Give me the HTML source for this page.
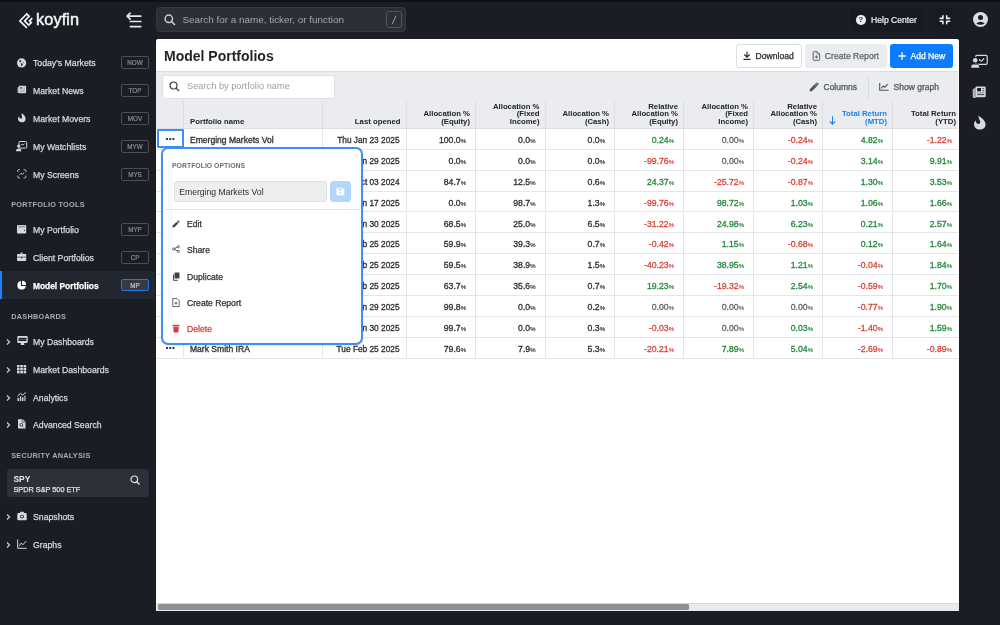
<!DOCTYPE html><html><head><meta charset="utf-8"><style>
*{margin:0;padding:0;box-sizing:border-box}
html,body{width:1000px;height:625px;overflow:hidden;background:#1a1d24;font-family:"Liberation Sans",sans-serif}
.a{position:absolute}
svg{display:block}
.side,.mi,.btn,.t{-webkit-text-stroke:0.25px currentColor}
.c{-webkit-text-stroke:0.3px currentColor}
#root{position:absolute;left:0;top:0;width:1000px;height:625px;will-change:transform}
.side{color:#d6d9de;font-size:8.7px;white-space:nowrap}
.sec{color:#a7abb2;font-size:7.3px;font-weight:bold;letter-spacing:0.27px}
.badge{position:absolute;left:121px;width:28px;height:12.6px;border:1px solid #4a4e56;border-radius:2px;color:#8e939b;font-size:6.3px;text-align:center;line-height:11px;letter-spacing:0;-webkit-text-stroke:0.15px currentColor}
.panel{position:absolute;left:156px;top:39px;width:802.5px;height:572px;background:#fff;border-radius:2px;overflow:hidden}
.btn{position:absolute;top:44px;height:23.5px;border-radius:3px;font-size:8.6px;line-height:23.5px;white-space:nowrap}
.hd{position:absolute;top:101px;height:28px;background:#ebecef;border-right:1px solid #dcdee2;border-bottom:1px solid #dcdee2;font-weight:bold;font-size:7.75px;line-height:7.55px;color:#202328;text-align:right;padding-right:5px;display:flex;flex-direction:column;justify-content:flex-end;padding-bottom:2.5px}
.c{position:absolute;height:20.85px;border-right:1px solid #e3e5e8;border-bottom:1px solid #e3e5e8;font-size:8.7px;line-height:22.6px;text-align:right;padding-right:9px;color:#2b2e33;white-space:nowrap;overflow:hidden}
.p{font-size:6px;-webkit-text-stroke:0.15px currentColor;margin-left:0.2px;letter-spacing:-0.2px}
.mi{position:absolute;left:187px;font-size:8.65px;color:#2c2f34;white-space:nowrap}
</style></head><body><div id="root">
<div class="a" style="left:0;top:0;width:1000px;height:1.5px;background:#0e1014"></div>
<svg class="a" style="left:17px;top:11px" width="18" height="20" viewBox="17 11 18 20"><path d="M26.9 27.95 L19.85 20.9 L26.75 14 L29.1 16.35 L24.55 20.9 L28.75 25.1 L31.3 22.55 L29.55 20.8 L32.3 18.05" fill="none" stroke="#f4f5f7" stroke-width="1.7" stroke-linejoin="miter" stroke-miterlimit="4"/></svg>
<div class="a" style="left:36px;top:10px;font-size:16.3px;color:#f4f5f7;letter-spacing:0.1px;-webkit-text-stroke:0.5px currentColor">koyfin</div>
<svg class="a" style="left:126px;top:12px" width="16" height="17" viewBox="0 0 16 17"><path d="M4.1 1.1 L1.1 4.1 L4.1 7.1 M1.2 4.1 H14.8 M4.4 9.5 H14.8 M4.4 14.6 H14.8" fill="none" stroke="#e4e6e9" stroke-width="1.7" stroke-linecap="round" stroke-linejoin="round"/></svg>
<div class="a" style="left:155.5px;top:7px;width:250.5px;height:24.7px;background:#2a2f38;border:1px solid #343943;border-radius:3.5px"></div>
<svg class="a" style="left:164px;top:14px" width="12" height="12" viewBox="0 0 12 12"><circle cx="4.8" cy="4.8" r="3.7" fill="none" stroke="#c9ccd1" stroke-width="1.5"/><path d="M7.6 7.6 L11 11" stroke="#c9ccd1" stroke-width="1.6"/></svg>
<div class="a" style="left:182.5px;top:13.5px;font-size:9.9px;color:#a4a8b0;white-space:nowrap">Search for a name, ticker, or function</div>
<div class="a" style="left:386px;top:11px;width:16px;height:17px;border:1px solid #50555e;border-radius:2.5px"></div>
<svg class="a" style="left:391px;top:15px" width="6" height="10" viewBox="0 0 6 10"><path d="M1.3 8.9 L4.9 1.1" stroke="#a9adb4" stroke-width="0.9" stroke-linecap="round"/></svg>
<div class="a" style="left:850px;top:8px;width:73px;height:23px;background:#171a20;border-radius:3px"></div>
<div class="a" style="left:856px;top:15.2px;width:9.6px;height:9.6px;border-radius:50%;background:#f0f1f3;color:#1a1d24;font-size:7.5px;font-weight:bold;text-align:center;line-height:9.8px">?</div>
<div class="a side" style="left:871px;top:14.5px;color:#eef0f2;font-size:8.6px;-webkit-text-stroke:0.2px currentColor">Help Center</div>
<div class="a" style="left:933.5px;top:7px;width:24px;height:25.5px;background:#181b21;border-radius:3px"></div>
<svg class="a" style="left:939px;top:14.5px" width="12" height="10" viewBox="0 0 12 10"><path d="M1.2 3.4 H3.9 V0.9 M7.7 0.9 V3.4 H10.6 M1.2 6.2 H3.9 V8.7 M7.7 8.7 V6.2 H10.6" fill="none" stroke="#eceef0" stroke-width="1.6" stroke-linejoin="round" stroke-linecap="round"/></svg>
<svg class="a" style="left:972.5px;top:12px" width="15" height="15" viewBox="0 0 15 15"><circle cx="7.5" cy="7.5" r="7.5" fill="#dcdde0"/><circle cx="7.5" cy="5.6" r="2.5" fill="#1a1d24"/><path d="M3.2 11.6 Q7.5 7.8 11.8 11.6 Q7.5 14 3.2 11.6Z" fill="#1a1d24"/></svg>
<div class="a" style="left:17px;top:57.5px;width:12px;height:11px"><svg width="10" height="10" viewBox="0 0 10 10"><circle cx="4.6" cy="4.9" r="4.6" fill="#d6d9de"/><path d="M2.3 3.3 Q2.8 1.8 4.3 2.1 Q4.6 3 3.6 3.7 Q3.6 4.6 2.8 4.4Z M3.9 5.4 Q5.2 5.1 5.9 6 Q5.4 7.2 4.6 8.6 Q3.9 7 3.9 5.4Z M6.4 3.9 Q7.2 3.9 7.2 4.6 Q6.7 5.2 6.2 4.7Z" fill="#1a1d24"/></svg></div>
<div class="a side" style="left:33px;top:58.0px;">Today's Markets</div>
<div class="badge" style="top:56.1px;">NOW</div>
<div class="a" style="left:17px;top:85.3px;width:12px;height:11px"><svg width="10" height="10" viewBox="0 0 10 10"><path d="M0.6 2.2 H1.7 V7.8 Q1.7 8.2 1.2 8.2 Q0.6 8.2 0.6 7.6Z" fill="#d6d9de"/><rect x="1.7" y="0.8" width="7.4" height="7.4" rx="0.8" fill="#d6d9de"/><ellipse cx="4.2" cy="2.9" rx="1.2" ry="0.7" fill="#1a1d24"/><path d="M6.5 2.3 H8 M6.5 3.6 H8 M3 5.3 H8 M3 6.7 H8" stroke="#8e9299" stroke-width="0.6"/></svg></div>
<div class="a side" style="left:33px;top:86.0px;">Market News</div>
<div class="badge" style="top:84.1px;">TOP</div>
<div class="a" style="left:17.8px;top:113.3px;width:12px;height:11px"><svg width="10" height="10" viewBox="0 0 10 10"><path d="M3.7 0 C5.5 1.7 7.6 3 7.6 5.9 C7.6 8 5.9 9.3 3.8 9.3 C1.6 9.3 0 7.8 0 5.8 C0 4.6 0.5 3.8 1.2 3.2 C1.2 4.6 1.9 5.5 2.9 5.5 C3.9 5.5 4.3 4.7 4 3.7 C3.7 2.7 3.4 1.3 3.7 0Z" fill="#d6d9de"/></svg></div>
<div class="a side" style="left:33px;top:114.0px;">Market Movers</div>
<div class="badge" style="top:112.1px;">MOV</div>
<div class="a" style="left:16px;top:140.5px;width:12px;height:11px"><svg width="12" height="11" viewBox="0 0 12 11"><rect x="2.9" y="0.5" width="7.8" height="6.6" rx="1" fill="none" stroke="#d6d9de" stroke-width="1"/><path d="M4.6 4.3 L6.2 3.3 L7.2 4 L8.5 2.6" fill="none" stroke="#d6d9de" stroke-width="0.9"/><circle cx="2.6" cy="5" r="1.5" fill="#d6d9de"/><path d="M0 10.3 Q0 7.4 2.6 7.4 Q5.4 7.4 5.4 10.3Z" fill="#d6d9de"/></svg></div>
<div class="a side" style="left:33px;top:142.0px;">My Watchlists</div>
<div class="badge" style="top:140.1px;">MYW</div>
<div class="a" style="left:17px;top:169.0px;width:12px;height:11px"><svg width="10" height="10" viewBox="0 0 10 10"><path d="M0.7 3 V1.7 Q0.7 0.7 1.7 0.7 H3 M6.6 0.7 H7.9 Q8.9 0.7 8.9 1.7 V3 M8.9 6.6 V7.9 Q8.9 8.9 7.9 8.9 H6.6 M3 8.9 H1.7 Q0.7 8.9 0.7 7.9 V6.6" fill="none" stroke="#b9bcc2" stroke-width="1"/><path d="M2.5 5.9 L4.1 4.3 L5.5 5.2 L7.2 3.6" fill="none" stroke="#d6d9de" stroke-width="0.9"/></svg></div>
<div class="a side" style="left:33px;top:170.0px;">My Screens</div>
<div class="badge" style="top:168.1px;">MYS</div>
<div class="a sec" style="left:11.2px;top:200.2px">PORTFOLIO TOOLS</div>
<div class="a" style="left:17px;top:225.0px;width:12px;height:11px"><svg width="10" height="10" viewBox="0 0 10 10"><rect x="0" y="0" width="9.2" height="8.4" rx="0.9" fill="#d6d9de"/><rect x="1.2" y="0.6" width="7" height="2" fill="#9c9fa5"/><circle cx="7.5" cy="5.3" r="0.6" fill="#1a1d24"/></svg></div>
<div class="a side" style="left:33px;top:225.0px;">My Portfolio</div>
<div class="badge" style="top:223.1px;">MYP</div>
<div class="a" style="left:17px;top:252.2px;width:12px;height:11px"><svg width="10" height="10" viewBox="0 0 10 10"><path d="M2.9 2 Q3.3 0.2 4.6 0.2 Q5.9 0.2 6.3 2Z" fill="#9c9fa5"/><rect x="0" y="2" width="9.2" height="7" rx="0.9" fill="#d6d9de"/><path d="M0 5.1 H9.2" stroke="#1a1d24" stroke-width="0.6"/><circle cx="4.6" cy="5.7" r="0.7" fill="#1a1d24"/></svg></div>
<div class="a side" style="left:33px;top:253.0px;">Client Portfolios</div>
<div class="badge" style="top:251.1px;">CP</div>
<div class="a" style="left:0;top:271px;width:155px;height:28px;background:#22262e"></div>
<div class="a" style="left:0;top:271px;width:2px;height:28px;background:#1a84ff"></div>
<div class="a" style="left:17px;top:280px;width:12px;height:11px"><svg width="10" height="10" viewBox="0 0 10 10"><path d="M3.9 1.1 A4.3 4.3 0 1 0 8.9 6.1 H3.9Z" fill="#fff"/><path d="M5 0.8 A4.3 4.3 0 0 1 9.1 4.9 H5Z" fill="#fff"/></svg></div>
<div class="a side" style="left:33px;top:280.5px;font-weight:bold;color:#fff;font-size:8.4px;">Model Portfolios</div>
<div class="badge" style="top:278.6px;border-color:#1f7ae8;background:#353a43;color:#c8ccd2;">MP</div>
<div class="a sec" style="left:11.2px;top:311.6px">DASHBOARDS</div>
<svg class="a" style="left:5.8px;top:339.0px" width="5" height="6" viewBox="0 0 5 6"><path d="M1 0.5 L3.6 3 L1 5.5" fill="none" stroke="#d0d3d8" stroke-width="1.1"/></svg>
<div class="a" style="left:16.5px;top:336.0px;width:12px;height:11px"><svg width="11" height="10" viewBox="0 0 11 10"><rect x="0.3" y="0" width="10.4" height="6.9" rx="1" fill="#d6d9de"/><rect x="1.6" y="1.8" width="7.8" height="3.2" fill="#1a1d24"/><path d="M1.6 3.4 H9.4" stroke="#8e9299" stroke-width="0.5"/><path d="M4 6.5 H7 L7.4 9 H3.6Z" fill="#d6d9de"/></svg></div>
<div class="a side" style="left:33px;top:337.0px;">My Dashboards</div>
<svg class="a" style="left:5.8px;top:367.0px" width="5" height="6" viewBox="0 0 5 6"><path d="M1 0.5 L3.6 3 L1 5.5" fill="none" stroke="#d0d3d8" stroke-width="1.1"/></svg>
<div class="a" style="left:17px;top:364.8px;width:12px;height:11px"><svg width="10" height="10" viewBox="0 0 10 10"><g fill="#d6d9de"><rect x="0" y="0" width="2.6" height="2.4"/><rect x="3.3" y="0" width="2.6" height="2.4"/><rect x="6.6" y="0" width="2.6" height="2.4"/><rect x="0" y="3" width="2.6" height="2.4"/><rect x="3.3" y="3" width="2.6" height="2.4"/><rect x="6.6" y="3" width="2.6" height="2.4"/><rect x="0" y="6" width="2.6" height="2.4"/><rect x="3.3" y="6" width="2.6" height="2.4"/><rect x="6.6" y="6" width="2.6" height="2.4"/></g></svg></div>
<div class="a side" style="left:33px;top:365.0px;">Market Dashboards</div>
<svg class="a" style="left:5.8px;top:394.5px" width="5" height="6" viewBox="0 0 5 6"><path d="M1 0.5 L3.6 3 L1 5.5" fill="none" stroke="#d0d3d8" stroke-width="1.1"/></svg>
<div class="a" style="left:17px;top:392px;width:12px;height:11px"><svg width="10" height="10" viewBox="0 0 10 10"><path d="M0.4 4 L3.6 1.4 L5.8 3 L8.9 0.4" fill="none" stroke="#d6d9de" stroke-width="1"/><g fill="#d6d9de"><rect x="0.5" y="5.8" width="1.4" height="3.3"/><rect x="2.8" y="4.3" width="1.4" height="4.8"/><rect x="5" y="5.3" width="1.4" height="3.8"/><rect x="7.2" y="3.7" width="1.4" height="5.4" fill="#a9acb2"/></g></svg></div>
<div class="a side" style="left:33px;top:392.5px;">Analytics</div>
<svg class="a" style="left:5.8px;top:422.0px" width="5" height="6" viewBox="0 0 5 6"><path d="M1 0.5 L3.6 3 L1 5.5" fill="none" stroke="#d0d3d8" stroke-width="1.1"/></svg>
<div class="a" style="left:17px;top:419.0px;width:12px;height:11px"><svg width="10" height="10" viewBox="0 0 10 10"><path d="M1 0.6 Q1 0.2 1.5 0.2 H5.7 L8.5 3 V9.1 Q8.5 9.6 8 9.6 H1.5 Q1 9.6 1 9.1Z" fill="#d6d9de"/><path d="M5.3 0.5 V2.7 Q5.3 3.3 5.9 3.3 H8.3" fill="none" stroke="#1a1d24" stroke-width="0.6"/><circle cx="4.3" cy="5.8" r="1.4" fill="none" stroke="#1a1d24" stroke-width="0.8"/><path d="M5.2 6.8 L6.2 7.7" stroke="#1a1d24" stroke-width="0.8"/></svg></div>
<div class="a side" style="left:33px;top:420.0px;">Advanced Search</div>
<div class="a sec" style="left:11.2px;top:451px">SECURITY ANALYSIS</div>
<div class="a" style="left:7px;top:469px;width:142px;height:28px;background:#2c3039;border-radius:3px"></div>
<div class="a" style="left:13.5px;top:473.5px;font-size:8.4px;font-weight:bold;color:#eceef1">SPY</div>
<div class="a t" style="left:13.5px;top:484.5px;font-size:7.3px;color:#dfe2e6;white-space:nowrap">SPDR S&amp;P 500 ETF</div>
<svg class="a" style="left:130px;top:475px" width="11" height="10" viewBox="0 0 11 10"><circle cx="4.3" cy="4.3" r="3.3" fill="none" stroke="#dfe1e5" stroke-width="1.2"/><path d="M6.7 6.7 L9.5 9.5" stroke="#dfe1e5" stroke-width="1.4"/></svg>
<svg class="a" style="left:5.8px;top:513.8px" width="5" height="6" viewBox="0 0 5 6"><path d="M1 0.5 L3.6 3 L1 5.5" fill="none" stroke="#d0d3d8" stroke-width="1.1"/></svg>
<div class="a" style="left:17px;top:511.29999999999995px;width:12px;height:11px"><svg width="10" height="10" viewBox="0 0 10 10"><path d="M0.3 3 Q0.3 2 1.3 2 H2.8 L3.6 0.8 H6.4 L7.2 2 H8.7 Q9.7 2 9.7 3 V8.4 Q9.7 9.2 8.7 9.2 H1.3 Q0.3 9.2 0.3 8.4Z" fill="#d6d9de"/><circle cx="5" cy="5.6" r="1.9" fill="#1a1d24"/><circle cx="5" cy="5.6" r="1.1" fill="#d6d9de"/></svg></div>
<div class="a side" style="left:33px;top:511.79999999999995px;">Snapshots</div>
<svg class="a" style="left:5.8px;top:541.5px" width="5" height="6" viewBox="0 0 5 6"><path d="M1 0.5 L3.6 3 L1 5.5" fill="none" stroke="#d0d3d8" stroke-width="1.1"/></svg>
<div class="a" style="left:17px;top:539px;width:12px;height:11px"><svg width="10" height="10" viewBox="0 0 10 10"><path d="M0.7 0.5 V9.3 H9.7" fill="none" stroke="#d6d9de" stroke-width="1"/><path d="M2.2 6.8 L4.2 4 L5.8 5.8 L9.2 2" fill="none" stroke="#d6d9de" stroke-width="1"/></svg></div>
<div class="a side" style="left:33px;top:539.5px;">Graphs</div>
<svg class="a" style="left:968px;top:52px" width="22" height="18" viewBox="968 52 22 18"><rect x="975.6" y="55.4" width="11.6" height="9" rx="1.4" fill="none" stroke="#d6d9de" stroke-width="1.2"/><path d="M979.4 59.6 Q980.8 62 982.2 60.4 L983.8 58.6" fill="none" stroke="#d6d9de" stroke-width="1.2" stroke-linecap="round"/><circle cx="975.2" cy="60.2" r="3.4" fill="#1a1d24"/><circle cx="975.2" cy="60.2" r="2.3" fill="#d6d9de"/><path d="M970.2 68.6 L970.9 65.6 Q971.4 64 973.2 64 H977.2 Q979 64 979.5 65.6 L980.2 68.6Z" fill="#1a1d24"/><path d="M971 67.8 L971.6 65.6 Q971.9 64.5 973.2 64.5 H977.2 Q978.5 64.5 978.8 65.6 L979.4 67.8Z" fill="#d6d9de"/></svg>
<svg class="a" style="left:972px;top:85px" width="15" height="14" viewBox="972 85 15 14"><path d="M974.8 88 V96.2 Q974.8 97.2 974 97.2 Q973.3 97.2 973.3 96.2 V89" fill="none" stroke="#d6d9de" stroke-width="1.1"/><rect x="975.4" y="86.4" width="10.3" height="10.9" rx="1.3" fill="#d6d9de"/><path d="M974 97.2 H976" stroke="#d6d9de" stroke-width="0.9"/><rect x="977.2" y="88" width="3.8" height="3.3" fill="#1a1d24"/><path d="M982.2 88.6 H984.2 M982.2 90.7 H984.2" stroke="#1a1d24" stroke-width="0.7"/><rect x="977.2" y="92.5" width="7" height="0.8" fill="#7d8189"/><rect x="977.2" y="94.3" width="7" height="0.8" fill="#1a1d24"/></svg>
<svg class="a" style="left:972px;top:114px" width="15" height="17" viewBox="972 114 15 17"><path d="M978.6 115.4 C981.2 118 985.6 120 985.6 124.5 C985.6 127.6 983.1 129.6 979.8 129.6 C976.5 129.6 974 127.3 974 124.3 C974 122.5 974.8 121.2 975.9 120.4 C975.9 122.5 976.9 123.9 978.4 123.9 C979.9 123.9 980.6 122.6 980.1 121.1 C979.6 119.6 978.1 117.5 978.6 115.4Z" fill="#d6d9de"/></svg>
<div class="panel"></div>
<div class="a" style="left:164px;top:47.5px;font-size:14px;font-weight:bold;color:#1f2227;white-space:nowrap">Model Portfolios</div>
<div class="btn" style="left:735.5px;width:66px;background:#fff;border:1px solid #dcdfe3;color:#2b2e33"></div>
<svg class="a" style="left:743px;top:51px" width="8" height="9" viewBox="0 0 8 9"><path d="M4 0.5 V6 M1.3 3.5 L4 6.2 L6.7 3.5 M0.5 8.3 H7.5" fill="none" stroke="#2b2e33" stroke-width="1.2"/></svg>
<div class="a t" style="left:755.5px;top:50.5px;font-size:8.6px;color:#26292e;white-space:nowrap">Download</div>
<div class="btn" style="left:805px;width:81.5px;background:#ebecef"></div>
<svg class="a" style="left:811.5px;top:50.5px" width="9" height="10" viewBox="0 0 9 10"><path d="M1.9 0.7 H5.3 L7.6 3 V8.6 Q7.6 9.3 6.9 9.3 H1.9 Q1.2 9.3 1.2 8.6 V1.4 Q1.2 0.7 1.9 0.7Z" fill="none" stroke="#5f636a" stroke-width="1"/><path d="M5.1 0.8 V2.6 Q5.1 3.2 5.7 3.2 H7.5" fill="none" stroke="#5f636a" stroke-width="0.8"/><path d="M4.4 4.3 V7.5 M2.8 5.9 H6" stroke="#5f636a" stroke-width="0.9"/></svg>
<div class="a t" style="left:824.8px;top:50.5px;font-size:8.65px;color:#5f636a;white-space:nowrap">Create Report</div>
<div class="btn" style="left:889.5px;width:63px;background:#0b7cff"></div>
<svg class="a" style="left:897.5px;top:51.5px" width="8" height="8" viewBox="0 0 8 8"><path d="M4 0.3 V7.7 M0.3 4 H7.7" stroke="#fff" stroke-width="1.3"/></svg>
<div class="a t" style="left:910.5px;top:50.5px;font-size:8.55px;color:#fff;white-space:nowrap">Add New</div>
<div class="a" style="left:156px;top:71px;width:802px;height:30px;background:#ebecef;border-top:1px solid #d9dce0"></div>
<div class="a" style="left:162px;top:74.5px;width:172.5px;height:24px;background:#fff;border:1px solid #dfe1e5;border-radius:3px"></div>
<svg class="a" style="left:168.5px;top:80.5px" width="11" height="11" viewBox="0 0 11 11"><circle cx="4.5" cy="4.5" r="3.5" fill="none" stroke="#3b3e44" stroke-width="1.2"/><path d="M7.1 7.1 L10 10" stroke="#3b3e44" stroke-width="1.3"/></svg>
<div class="a" style="left:187px;top:81px;font-size:9.25px;color:#9a9ea5;white-space:nowrap">Search by portfolio name</div>
<svg class="a" style="left:808.5px;top:82px" width="10" height="10" viewBox="0 0 10 10"><path d="M0.6 9.4 L1 6.9 L6.6 1.3 L8.7 3.4 L3.1 9Z" fill="#4f535a"/><path d="M7.2 0.7 Q7.8 0.1 8.4 0.7 L9.3 1.6 Q9.9 2.2 9.3 2.8 L8.9 3.2 L6.8 1.1Z" fill="#4f535a"/><path d="M5.6 2.3 L7.7 4.4" stroke="#ebecef" stroke-width="0.5"/></svg>
<div class="a t" style="left:823.5px;top:82.4px;font-size:8.5px;color:#4f535a;white-space:nowrap">Columns</div>
<div class="a" style="left:868px;top:77.5px;width:1px;height:21px;background:#d6d9dd"></div>
<svg class="a" style="left:879px;top:83px" width="10" height="8" viewBox="0 0 10 8"><path d="M0.7 0 V7.2 H9.5" fill="none" stroke="#4f535a" stroke-width="1.1"/><path d="M2.4 5.3 L4.3 3 L5.8 4.2 L8.6 1.2" fill="none" stroke="#4f535a" stroke-width="1.1"/></svg>
<div class="a t" style="left:893.5px;top:82.4px;font-size:8.55px;color:#4f535a;white-space:nowrap">Show graph</div>
<div class="a" style="left:156px;top:101px;width:802px;height:1px;background:#d6d9de"></div>
<div class="a" style="left:0;top:0;width:957.5px;height:625px;overflow:hidden">
<div class="hd" style="left:156px;width:28px;"></div>
<div class="hd" style="left:184px;width:139px;text-align:left;padding-left:6px;"><div>Portfolio name</div></div>
<div class="hd" style="left:323px;width:83.5px;"><div>Last opened</div></div>
<div class="hd" style="left:406.5px;width:69.5px;"><div>Allocation %<br>(Equity)</div></div>
<div class="hd" style="left:476px;width:69.5px;"><div>Allocation %<br>(Fixed<br>Income)</div></div>
<div class="hd" style="left:545.5px;width:69.5px;"><div>Allocation %<br>(Cash)</div></div>
<div class="hd" style="left:615px;width:69px;"><div>Relative<br>Allocation %<br>(Equity)</div></div>
<div class="hd" style="left:684px;width:70px;"><div>Allocation %<br>(Fixed<br>Income)</div></div>
<div class="hd" style="left:754px;width:69px;"><div>Relative<br>Allocation %<br>(Cash)</div></div>
<div class="hd" style="left:823px;width:70px;color:#1a7ef0;"><div>Total Return<br>(MTD)</div></div>
<div class="hd" style="left:893px;width:69px;"><div>Total Return<br>(YTD)</div></div>
<svg class="a" style="left:828.5px;top:116px" width="7" height="9" viewBox="0 0 7 9"><path d="M3.5 0.3 V8 M0.8 5.3 L3.5 8.2 L6.2 5.3" fill="none" stroke="#1a7ef0" stroke-width="1.1"/></svg>
<div class="c" style="left:156px;top:129.0px;width:28px;padding:0"></div>
<div class="a" style="left:166px;top:138.2px;width:1.7px;height:1.7px;background:#3a3d42;box-shadow:3.2px 0 0 #3a3d42,6.4px 0 0 #3a3d42"></div>
<div class="c" style="left:184px;top:129.0px;width:139px;text-align:left;padding-left:6px;font-size:8.55px">Emerging Markets Vol</div>
<div class="c" style="left:323px;top:129.0px;width:83.5px;padding-right:6px;font-size:8.3px">Thu Jan 23 2025</div>
<div class="c" style="left:406.5px;top:129.0px;width:69.5px;color:#2b2e33">100.0<span class="p">%</span></div>
<div class="c" style="left:476px;top:129.0px;width:69.5px;color:#2b2e33">0.0<span class="p">%</span></div>
<div class="c" style="left:545.5px;top:129.0px;width:69.5px;color:#2b2e33">0.0<span class="p">%</span></div>
<div class="c" style="left:615px;top:129.0px;width:69px;color:#23883d">0.24<span class="p">%</span></div>
<div class="c" style="left:684px;top:129.0px;width:70px;color:#5f636a">0.00<span class="p">%</span></div>
<div class="c" style="left:754px;top:129.0px;width:69px;color:#d8453a">-0.24<span class="p">%</span></div>
<div class="c" style="left:823px;top:129.0px;width:70px;color:#23883d">4.82<span class="p">%</span></div>
<div class="c" style="left:893px;top:129.0px;width:69px;color:#d8453a">-1.22<span class="p">%</span></div>
<div class="c" style="left:156px;top:149.88px;width:28px;padding:0"></div>
<div class="a" style="left:166px;top:159.07999999999998px;width:1.7px;height:1.7px;background:#3a3d42;box-shadow:3.2px 0 0 #3a3d42,6.4px 0 0 #3a3d42"></div>
<div class="c" style="left:184px;top:149.88px;width:139px;text-align:left;padding-left:6px;font-size:8.55px">Global Tilt</div>
<div class="c" style="left:323px;top:149.88px;width:83.5px;padding-right:6px;font-size:8.3px">Wed Jan 29 2025</div>
<div class="c" style="left:406.5px;top:149.88px;width:69.5px;color:#2b2e33">0.0<span class="p">%</span></div>
<div class="c" style="left:476px;top:149.88px;width:69.5px;color:#2b2e33">0.0<span class="p">%</span></div>
<div class="c" style="left:545.5px;top:149.88px;width:69.5px;color:#2b2e33">0.0<span class="p">%</span></div>
<div class="c" style="left:615px;top:149.88px;width:69px;color:#d8453a">-99.76<span class="p">%</span></div>
<div class="c" style="left:684px;top:149.88px;width:70px;color:#5f636a">0.00<span class="p">%</span></div>
<div class="c" style="left:754px;top:149.88px;width:69px;color:#d8453a">-0.24<span class="p">%</span></div>
<div class="c" style="left:823px;top:149.88px;width:70px;color:#23883d">3.14<span class="p">%</span></div>
<div class="c" style="left:893px;top:149.88px;width:69px;color:#23883d">9.91<span class="p">%</span></div>
<div class="c" style="left:156px;top:170.76px;width:28px;padding:0"></div>
<div class="a" style="left:166px;top:179.95999999999998px;width:1.7px;height:1.7px;background:#3a3d42;box-shadow:3.2px 0 0 #3a3d42,6.4px 0 0 #3a3d42"></div>
<div class="c" style="left:184px;top:170.76px;width:139px;text-align:left;padding-left:6px;font-size:8.55px">Balanced Growth</div>
<div class="c" style="left:323px;top:170.76px;width:83.5px;padding-right:6px;font-size:8.3px">Thu Oct 03 2024</div>
<div class="c" style="left:406.5px;top:170.76px;width:69.5px;color:#2b2e33">84.7<span class="p">%</span></div>
<div class="c" style="left:476px;top:170.76px;width:69.5px;color:#2b2e33">12.5<span class="p">%</span></div>
<div class="c" style="left:545.5px;top:170.76px;width:69.5px;color:#2b2e33">0.6<span class="p">%</span></div>
<div class="c" style="left:615px;top:170.76px;width:69px;color:#23883d">24.37<span class="p">%</span></div>
<div class="c" style="left:684px;top:170.76px;width:70px;color:#d8453a">-25.72<span class="p">%</span></div>
<div class="c" style="left:754px;top:170.76px;width:69px;color:#d8453a">-0.87<span class="p">%</span></div>
<div class="c" style="left:823px;top:170.76px;width:70px;color:#23883d">1.30<span class="p">%</span></div>
<div class="c" style="left:893px;top:170.76px;width:69px;color:#23883d">3.53<span class="p">%</span></div>
<div class="c" style="left:156px;top:191.64px;width:28px;padding:0"></div>
<div class="a" style="left:166px;top:200.83999999999997px;width:1.7px;height:1.7px;background:#3a3d42;box-shadow:3.2px 0 0 #3a3d42,6.4px 0 0 #3a3d42"></div>
<div class="c" style="left:184px;top:191.64px;width:139px;text-align:left;padding-left:6px;font-size:8.55px">Fixed Income Core</div>
<div class="c" style="left:323px;top:191.64px;width:83.5px;padding-right:6px;font-size:8.3px">Fri Jan 17 2025</div>
<div class="c" style="left:406.5px;top:191.64px;width:69.5px;color:#2b2e33">0.0<span class="p">%</span></div>
<div class="c" style="left:476px;top:191.64px;width:69.5px;color:#2b2e33">98.7<span class="p">%</span></div>
<div class="c" style="left:545.5px;top:191.64px;width:69.5px;color:#2b2e33">1.3<span class="p">%</span></div>
<div class="c" style="left:615px;top:191.64px;width:69px;color:#d8453a">-99.76<span class="p">%</span></div>
<div class="c" style="left:684px;top:191.64px;width:70px;color:#23883d">98.72<span class="p">%</span></div>
<div class="c" style="left:754px;top:191.64px;width:69px;color:#23883d">1.03<span class="p">%</span></div>
<div class="c" style="left:823px;top:191.64px;width:70px;color:#23883d">1.06<span class="p">%</span></div>
<div class="c" style="left:893px;top:191.64px;width:69px;color:#23883d">1.66<span class="p">%</span></div>
<div class="c" style="left:156px;top:212.51999999999998px;width:28px;padding:0"></div>
<div class="a" style="left:166px;top:221.71999999999997px;width:1.7px;height:1.7px;background:#3a3d42;box-shadow:3.2px 0 0 #3a3d42,6.4px 0 0 #3a3d42"></div>
<div class="c" style="left:184px;top:212.51999999999998px;width:139px;text-align:left;padding-left:6px;font-size:8.55px">Moderate</div>
<div class="c" style="left:323px;top:212.51999999999998px;width:83.5px;padding-right:6px;font-size:8.3px">Thu Jan 30 2025</div>
<div class="c" style="left:406.5px;top:212.51999999999998px;width:69.5px;color:#2b2e33">68.5<span class="p">%</span></div>
<div class="c" style="left:476px;top:212.51999999999998px;width:69.5px;color:#2b2e33">25.0<span class="p">%</span></div>
<div class="c" style="left:545.5px;top:212.51999999999998px;width:69.5px;color:#2b2e33">6.5<span class="p">%</span></div>
<div class="c" style="left:615px;top:212.51999999999998px;width:69px;color:#d8453a">-31.22<span class="p">%</span></div>
<div class="c" style="left:684px;top:212.51999999999998px;width:70px;color:#23883d">24.98<span class="p">%</span></div>
<div class="c" style="left:754px;top:212.51999999999998px;width:69px;color:#23883d">6.23<span class="p">%</span></div>
<div class="c" style="left:823px;top:212.51999999999998px;width:70px;color:#23883d">0.21<span class="p">%</span></div>
<div class="c" style="left:893px;top:212.51999999999998px;width:69px;color:#23883d">2.57<span class="p">%</span></div>
<div class="c" style="left:156px;top:233.39999999999998px;width:28px;padding:0"></div>
<div class="a" style="left:166px;top:242.59999999999997px;width:1.7px;height:1.7px;background:#3a3d42;box-shadow:3.2px 0 0 #3a3d42,6.4px 0 0 #3a3d42"></div>
<div class="c" style="left:184px;top:233.39999999999998px;width:139px;text-align:left;padding-left:6px;font-size:8.55px">Conservative</div>
<div class="c" style="left:323px;top:233.39999999999998px;width:83.5px;padding-right:6px;font-size:8.3px">Tue Feb 25 2025</div>
<div class="c" style="left:406.5px;top:233.39999999999998px;width:69.5px;color:#2b2e33">59.9<span class="p">%</span></div>
<div class="c" style="left:476px;top:233.39999999999998px;width:69.5px;color:#2b2e33">39.3<span class="p">%</span></div>
<div class="c" style="left:545.5px;top:233.39999999999998px;width:69.5px;color:#2b2e33">0.7<span class="p">%</span></div>
<div class="c" style="left:615px;top:233.39999999999998px;width:69px;color:#d8453a">-0.42<span class="p">%</span></div>
<div class="c" style="left:684px;top:233.39999999999998px;width:70px;color:#23883d">1.15<span class="p">%</span></div>
<div class="c" style="left:754px;top:233.39999999999998px;width:69px;color:#d8453a">-0.68<span class="p">%</span></div>
<div class="c" style="left:823px;top:233.39999999999998px;width:70px;color:#23883d">0.12<span class="p">%</span></div>
<div class="c" style="left:893px;top:233.39999999999998px;width:69px;color:#23883d">1.64<span class="p">%</span></div>
<div class="c" style="left:156px;top:254.28px;width:28px;padding:0"></div>
<div class="a" style="left:166px;top:263.48px;width:1.7px;height:1.7px;background:#3a3d42;box-shadow:3.2px 0 0 #3a3d42,6.4px 0 0 #3a3d42"></div>
<div class="c" style="left:184px;top:254.28px;width:139px;text-align:left;padding-left:6px;font-size:8.55px">Income</div>
<div class="c" style="left:323px;top:254.28px;width:83.5px;padding-right:6px;font-size:8.3px">Tue Feb 25 2025</div>
<div class="c" style="left:406.5px;top:254.28px;width:69.5px;color:#2b2e33">59.5<span class="p">%</span></div>
<div class="c" style="left:476px;top:254.28px;width:69.5px;color:#2b2e33">38.9<span class="p">%</span></div>
<div class="c" style="left:545.5px;top:254.28px;width:69.5px;color:#2b2e33">1.5<span class="p">%</span></div>
<div class="c" style="left:615px;top:254.28px;width:69px;color:#d8453a">-40.23<span class="p">%</span></div>
<div class="c" style="left:684px;top:254.28px;width:70px;color:#23883d">38.95<span class="p">%</span></div>
<div class="c" style="left:754px;top:254.28px;width:69px;color:#23883d">1.21<span class="p">%</span></div>
<div class="c" style="left:823px;top:254.28px;width:70px;color:#d8453a">-0.04<span class="p">%</span></div>
<div class="c" style="left:893px;top:254.28px;width:69px;color:#23883d">1.84<span class="p">%</span></div>
<div class="c" style="left:156px;top:275.15999999999997px;width:28px;padding:0"></div>
<div class="a" style="left:166px;top:284.35999999999996px;width:1.7px;height:1.7px;background:#3a3d42;box-shadow:3.2px 0 0 #3a3d42,6.4px 0 0 #3a3d42"></div>
<div class="c" style="left:184px;top:275.15999999999997px;width:139px;text-align:left;padding-left:6px;font-size:8.55px">Dividend</div>
<div class="c" style="left:323px;top:275.15999999999997px;width:83.5px;padding-right:6px;font-size:8.3px">Tue Feb 25 2025</div>
<div class="c" style="left:406.5px;top:275.15999999999997px;width:69.5px;color:#2b2e33">63.7<span class="p">%</span></div>
<div class="c" style="left:476px;top:275.15999999999997px;width:69.5px;color:#2b2e33">35.6<span class="p">%</span></div>
<div class="c" style="left:545.5px;top:275.15999999999997px;width:69.5px;color:#2b2e33">0.7<span class="p">%</span></div>
<div class="c" style="left:615px;top:275.15999999999997px;width:69px;color:#23883d">19.23<span class="p">%</span></div>
<div class="c" style="left:684px;top:275.15999999999997px;width:70px;color:#d8453a">-19.32<span class="p">%</span></div>
<div class="c" style="left:754px;top:275.15999999999997px;width:69px;color:#23883d">2.54<span class="p">%</span></div>
<div class="c" style="left:823px;top:275.15999999999997px;width:70px;color:#d8453a">-0.59<span class="p">%</span></div>
<div class="c" style="left:893px;top:275.15999999999997px;width:69px;color:#23883d">1.70<span class="p">%</span></div>
<div class="c" style="left:156px;top:296.03999999999996px;width:28px;padding:0"></div>
<div class="a" style="left:166px;top:305.23999999999995px;width:1.7px;height:1.7px;background:#3a3d42;box-shadow:3.2px 0 0 #3a3d42,6.4px 0 0 #3a3d42"></div>
<div class="c" style="left:184px;top:296.03999999999996px;width:139px;text-align:left;padding-left:6px;font-size:8.55px">US Large Cap</div>
<div class="c" style="left:323px;top:296.03999999999996px;width:83.5px;padding-right:6px;font-size:8.3px">Wed Jan 29 2025</div>
<div class="c" style="left:406.5px;top:296.03999999999996px;width:69.5px;color:#2b2e33">99.8<span class="p">%</span></div>
<div class="c" style="left:476px;top:296.03999999999996px;width:69.5px;color:#2b2e33">0.0<span class="p">%</span></div>
<div class="c" style="left:545.5px;top:296.03999999999996px;width:69.5px;color:#2b2e33">0.2<span class="p">%</span></div>
<div class="c" style="left:615px;top:296.03999999999996px;width:69px;color:#5f636a">0.00<span class="p">%</span></div>
<div class="c" style="left:684px;top:296.03999999999996px;width:70px;color:#5f636a">0.00<span class="p">%</span></div>
<div class="c" style="left:754px;top:296.03999999999996px;width:69px;color:#5f636a">0.00<span class="p">%</span></div>
<div class="c" style="left:823px;top:296.03999999999996px;width:70px;color:#d8453a">-0.77<span class="p">%</span></div>
<div class="c" style="left:893px;top:296.03999999999996px;width:69px;color:#23883d">1.90<span class="p">%</span></div>
<div class="c" style="left:156px;top:316.91999999999996px;width:28px;padding:0"></div>
<div class="a" style="left:166px;top:326.11999999999995px;width:1.7px;height:1.7px;background:#3a3d42;box-shadow:3.2px 0 0 #3a3d42,6.4px 0 0 #3a3d42"></div>
<div class="c" style="left:184px;top:316.91999999999996px;width:139px;text-align:left;padding-left:6px;font-size:8.55px">Tech Leaders</div>
<div class="c" style="left:323px;top:316.91999999999996px;width:83.5px;padding-right:6px;font-size:8.3px">Thu Jan 30 2025</div>
<div class="c" style="left:406.5px;top:316.91999999999996px;width:69.5px;color:#2b2e33">99.7<span class="p">%</span></div>
<div class="c" style="left:476px;top:316.91999999999996px;width:69.5px;color:#2b2e33">0.0<span class="p">%</span></div>
<div class="c" style="left:545.5px;top:316.91999999999996px;width:69.5px;color:#2b2e33">0.3<span class="p">%</span></div>
<div class="c" style="left:615px;top:316.91999999999996px;width:69px;color:#d8453a">-0.03<span class="p">%</span></div>
<div class="c" style="left:684px;top:316.91999999999996px;width:70px;color:#5f636a">0.00<span class="p">%</span></div>
<div class="c" style="left:754px;top:316.91999999999996px;width:69px;color:#23883d">0.03<span class="p">%</span></div>
<div class="c" style="left:823px;top:316.91999999999996px;width:70px;color:#d8453a">-1.40<span class="p">%</span></div>
<div class="c" style="left:893px;top:316.91999999999996px;width:69px;color:#23883d">1.59<span class="p">%</span></div>
<div class="c" style="left:156px;top:337.79999999999995px;width:28px;padding:0"></div>
<div class="a" style="left:166px;top:346.99999999999994px;width:1.7px;height:1.7px;background:#3a3d42;box-shadow:3.2px 0 0 #3a3d42,6.4px 0 0 #3a3d42"></div>
<div class="c" style="left:184px;top:337.79999999999995px;width:139px;text-align:left;padding-left:6px;font-size:8.55px">Mark Smith IRA</div>
<div class="c" style="left:323px;top:337.79999999999995px;width:83.5px;padding-right:6px;font-size:8.3px">Tue Feb 25 2025</div>
<div class="c" style="left:406.5px;top:337.79999999999995px;width:69.5px;color:#2b2e33">79.6<span class="p">%</span></div>
<div class="c" style="left:476px;top:337.79999999999995px;width:69.5px;color:#2b2e33">7.9<span class="p">%</span></div>
<div class="c" style="left:545.5px;top:337.79999999999995px;width:69.5px;color:#2b2e33">5.3<span class="p">%</span></div>
<div class="c" style="left:615px;top:337.79999999999995px;width:69px;color:#d8453a">-20.21<span class="p">%</span></div>
<div class="c" style="left:684px;top:337.79999999999995px;width:70px;color:#23883d">7.89<span class="p">%</span></div>
<div class="c" style="left:754px;top:337.79999999999995px;width:69px;color:#23883d">5.04<span class="p">%</span></div>
<div class="c" style="left:823px;top:337.79999999999995px;width:70px;color:#d8453a">-2.69<span class="p">%</span></div>
<div class="c" style="left:893px;top:337.79999999999995px;width:69px;color:#d8453a">-0.89<span class="p">%</span></div>
</div>
<div class="a" style="left:156.5px;top:129px;width:27.5px;height:18.5px;border:2px solid #3b8ef5;border-radius:1px"></div>
<div class="a" style="left:161px;top:147px;width:202px;height:198px;background:#fff;border:2px solid #3d8ef6;border-radius:7px;box-shadow:0 1px 2px rgba(0,0,0,0.08)"></div>
<div class="a" style="left:172px;top:161.5px;font-size:6.9px;font-weight:bold;color:#6b6f76;white-space:nowrap">PORTFOLIO OPTIONS</div>
<div class="a" style="left:173.5px;top:181px;width:153px;height:21px;background:#eceef0;border:1px solid #dde0e4;border-radius:3px"></div>
<div class="a" style="left:179.2px;top:186.5px;font-size:8.65px;color:#2b2e33;white-space:nowrap">Emerging Markets Vol</div>
<div class="a" style="left:330px;top:181px;width:21px;height:21px;background:#b3d7fc;border-radius:3.5px"></div>
<svg class="a" style="left:335.5px;top:187px" width="9" height="9" viewBox="0 0 9 9"><path d="M1.3 0.7 H6.5 L8.3 2.5 V7.4 Q8.3 8.2 7.5 8.2 H1.3 Q0.5 8.2 0.5 7.4 V1.5 Q0.5 0.7 1.3 0.7Z" fill="#fff"/><rect x="2" y="1.6" width="3.8" height="1.6" fill="#b3d7fc"/><rect x="3.6" y="4.8" width="1.6" height="1.6" fill="#b3d7fc"/></svg>
<div class="a" style="left:164.5px;top:209px;width:195.5px;height:1px;background:#e3e5e8"></div>
<svg class="a" style="left:171.8px;top:219.5px" width="8" height="8" viewBox="0 0 8 8"><path d="M0.4 7.6 L0.8 5.6 L5.2 1.2 L6.8 2.8 L2.4 7.2Z" fill="#3f4349"/><path d="M5.8 0.6 Q6.3 0.1 6.8 0.6 L7.4 1.2 Q7.9 1.7 7.4 2.2 L7.2 2.4 L5.6 0.8Z" fill="#3f4349"/><path d="M4.4 1.9 L6.1 3.6" stroke="#fff" stroke-width="0.45"/></svg>
<div class="mi" style="top:218.5px">Edit</div>
<svg class="a" style="left:172px;top:245px" width="8" height="8" viewBox="0 0 8 8"><circle cx="1.8" cy="4" r="1.2" fill="none" stroke="#3f4349" stroke-width="0.8"/><circle cx="6.3" cy="1.7" r="1.1" fill="none" stroke="#3f4349" stroke-width="0.8"/><circle cx="6.3" cy="6.3" r="1.1" fill="none" stroke="#3f4349" stroke-width="0.8"/><path d="M2.9 3.4 L5.3 2.2 M2.9 4.6 L5.3 5.8" stroke="#3f4349" stroke-width="0.8"/></svg>
<div class="mi" style="top:245px">Share</div>
<svg class="a" style="left:172px;top:271.5px" width="8" height="9" viewBox="0 0 8 9"><rect x="2.5" y="0.5" width="5" height="6" rx="0.6" fill="#3f4349"/><path d="M1.5 2.5 V8.3 H5.8" fill="none" stroke="#3f4349" stroke-width="1"/></svg>
<div class="mi" style="top:271.5px">Duplicate</div>
<svg class="a" style="left:172px;top:297.5px" width="8" height="9" viewBox="0 0 8 9"><path d="M0.8 0.5 H5 L7.2 2.7 V8.5 H0.8Z" fill="none" stroke="#3f4349" stroke-width="0.8"/><path d="M4 3.8 V6.6 M2.6 5.2 H5.4" stroke="#3f4349" stroke-width="0.8"/></svg>
<div class="mi" style="top:298px">Create Report</div>
<svg class="a" style="left:172px;top:324px" width="8" height="9" viewBox="0 0 8 9"><rect x="0.5" y="0.8" width="7" height="1.5" fill="#d23f36"/><path d="M1.2 2.8 H6.8 L6.3 8.6 H1.7Z" fill="#d23f36"/></svg>
<div class="mi" style="top:324px;color:#d23f36">Delete</div>
<div class="a" style="left:156px;top:602.5px;width:802.5px;height:8px;background:#e9eaed;border-top:1px solid #d3d6db"></div>
<div class="a" style="left:157.7px;top:604.2px;width:531px;height:5.5px;background:#8e8f91;border-radius:1.5px"></div>
</div></body></html>
